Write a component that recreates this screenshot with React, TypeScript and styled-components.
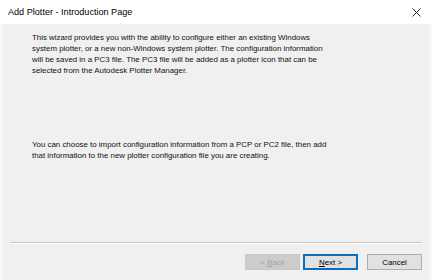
import React from "react";
import styled, { createGlobalStyle } from "styled-components";

const Global = createGlobalStyle`
  html, body { margin: 0; padding: 0; background: #ffffff; }
  body { width: 432px; height: 280px; overflow: hidden; }
`;

const Window = styled.div`
  width: 432px;
  height: 280px;
  display: flex;
  flex-direction: column;
  font-family: "Liberation Sans", Arial, sans-serif;
  color: #000;
  box-sizing: border-box;
`;

const TitleBar = styled.div`
  height: 24px;
  flex: none;
  background: #ffffff;
  display: flex;
  align-items: center;
  justify-content: space-between;
  padding: 0 8px 0 8px;
  box-sizing: border-box;
`;

const Title = styled.span`
  font-size: 9.1px;
  color: #000;
`;

const CloseButton = styled.div`
  width: 22px;
  height: 22px;
  display: flex;
  align-items: center;
  justify-content: center;
  margin-right: -3px;
`;

const Body = styled.div`
  flex: 1;
  background: #f0f0f0;
  display: flex;
  flex-direction: column;
  box-sizing: border-box;
  border-left: 3px solid #f6f6f6;
  border-right: 3px solid #f6f6f6;
`;

const Content = styled.div`
  flex: 1;
  padding: 8px 0 0 29px;
  display: flex;
  flex-direction: column;
  gap: 63px;
`;

const Paragraph = styled.div`
  font-size: 7.9px;
  line-height: 11px;
  color: #111;
`;

const Line = styled.div`
  white-space: nowrap;
`;

const Separator = styled.div`
  margin: 0 7px 0 7px;
  height: 2px;
  border-top: 1px solid #c4c4c4;
  border-bottom: 1px solid #ffffff;
  box-sizing: border-box;
`;

const ButtonRow = styled.div`
  display: flex;
  justify-content: flex-end;
  padding: 10px 7px 10px 0;
`;

const Button = styled.div<{ $variant?: "disabled" | "default" | "normal"; $gap?: number }>`
  width: 55px;
  height: 16px;
  box-sizing: border-box;
  margin-left: ${(p) => p.$gap ?? 0}px;
  display: flex;
  align-items: center;
  justify-content: center;
  font-size: 7.9px;
  background: ${(p) => (p.$variant === "disabled" ? "#cccccc" : "#e1e1e1")};
  color: ${(p) => (p.$variant === "disabled" ? "#a3a3a3" : "#000")};
  border: ${(p) =>
    p.$variant === "default"
      ? "2px solid #0a6fc2"
      : p.$variant === "disabled"
      ? "1px solid #c8c8c8"
      : "1px solid #adadad"};
`;

const U = styled.span`
  text-decoration: underline;
`;

export default function App() {
  return (
    <>
      <Global />
      <Window>
        <TitleBar>
          <Title>Add Plotter - Introduction Page</Title>
          <CloseButton>
            <svg width="9" height="9" viewBox="0 0 9 9">
              <path d="M0.5 0.5 L8.5 8.5 M8.5 0.5 L0.5 8.5" stroke="#222" strokeWidth="1" fill="none" />
            </svg>
          </CloseButton>
        </TitleBar>
        <Body>
          <Content>
            <Paragraph>
              <Line>This wizard provides you with the ability to configure either an existing Windows</Line>
              <Line>system plotter, or a new non-Windows system plotter. The configuration information</Line>
              <Line>will be saved in a PC3 file. The PC3 file will be added as a plotter icon that can be</Line>
              <Line>selected from the Autodesk Plotter Manager.</Line>
            </Paragraph>
            <Paragraph>
              <Line>You can choose to import configuration information from a PCP or PC2 file, then add</Line>
              <Line>that information to the new plotter configuration file you are creating.</Line>
            </Paragraph>
          </Content>
          <Separator />
          <ButtonRow>
            <Button $variant="disabled">
              &lt;&nbsp;<U>B</U>ack
            </Button>
            <Button $variant="default" $gap={3}>
              <U>N</U>ext&nbsp;&gt;
            </Button>
            <Button $variant="normal" $gap={9}>
              Cancel
            </Button>
          </ButtonRow>
        </Body>
      </Window>
    </>
  );
}
